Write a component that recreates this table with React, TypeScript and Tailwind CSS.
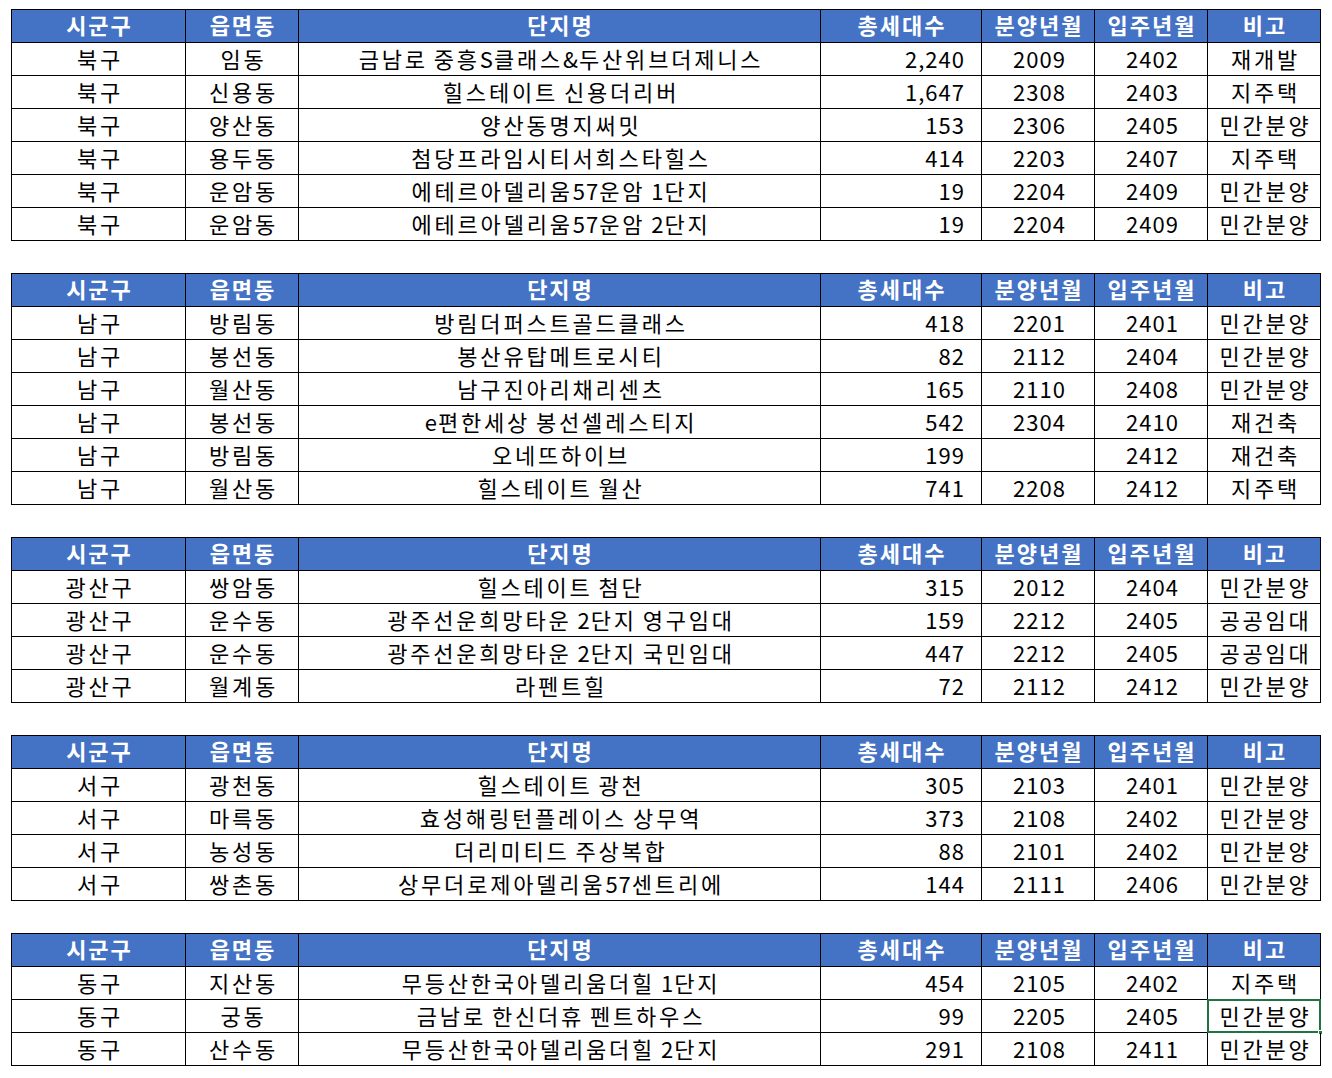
import React from 'react';

type Row = [string, string, string, string, string, string, string];

const tables: Row[][] = [
  [
    ['북구', '임동', '금남로 중흥S클래스&두산위브더제니스', '2,240', '2009', '2402', '재개발'],
    ['북구', '신용동', '힐스테이트 신용더리버', '1,647', '2308', '2403', '지주택'],
    ['북구', '양산동', '양산동명지써밋', '153', '2306', '2405', '민간분양'],
    ['북구', '용두동', '첨당프라임시티서희스타힐스', '414', '2203', '2407', '지주택'],
    ['북구', '운암동', '에테르아델리움57운암 1단지', '19', '2204', '2409', '민간분양'],
    ['북구', '운암동', '에테르아델리움57운암 2단지', '19', '2204', '2409', '민간분양'],
  ],
  [
    ['남구', '방림동', '방림더퍼스트골드클래스', '418', '2201', '2401', '민간분양'],
    ['남구', '봉선동', '봉산유탑메트로시티', '82', '2112', '2404', '민간분양'],
    ['남구', '월산동', '남구진아리채리센츠', '165', '2110', '2408', '민간분양'],
    ['남구', '봉선동', 'e편한세상 봉선셀레스티지', '542', '2304', '2410', '재건축'],
    ['남구', '방림동', '오네뜨하이브', '199', '', '2412', '재건축'],
    ['남구', '월산동', '힐스테이트 월산', '741', '2208', '2412', '지주택'],
  ],
  [
    ['광산구', '쌍암동', '힐스테이트 첨단', '315', '2012', '2404', '민간분양'],
    ['광산구', '운수동', '광주선운희망타운 2단지 영구임대', '159', '2212', '2405', '공공임대'],
    ['광산구', '운수동', '광주선운희망타운 2단지 국민임대', '447', '2212', '2405', '공공임대'],
    ['광산구', '월계동', '라펜트힐', '72', '2112', '2412', '민간분양'],
  ],
  [
    ['서구', '광천동', '힐스테이트 광천', '305', '2103', '2401', '민간분양'],
    ['서구', '마륵동', '효성해링턴플레이스 상무역', '373', '2108', '2402', '민간분양'],
    ['서구', '농성동', '더리미티드 주상복합', '88', '2101', '2402', '민간분양'],
    ['서구', '쌍촌동', '상무더로제아델리움57센트리에', '144', '2111', '2406', '민간분양'],
  ],
  [
    ['동구', '지산동', '무등산한국아델리움더힐 1단지', '454', '2105', '2402', '지주택'],
    ['동구', '궁동', '금남로 한신더휴 펜트하우스', '99', '2205', '2405', '민간분양'],
    ['동구', '산수동', '무등산한국아델리움더힐 2단지', '291', '2108', '2411', '민간분양'],
  ],
];

const headers = ['시군구', '읍면동', '단지명', '총세대수', '분양년월', '입주년월', '비고'];

const gridCols = 'grid grid-cols-[174px_113px_522px_161px_113px_113px_113px]';

// Malgun Gothic spaces Hangul wider than Noto, so widen only the Hangul runs
function SpacedText({ text }: { text: string }) {
  const parts = text.split(/([\uAC00-\uD7A3]+)/).filter(Boolean);
  return (
    <span className="whitespace-pre">
      {parts.map((p, i) =>
        /[\uAC00-\uD7A3]/.test(p) ? (
          <span key={i} className="tracking-[2.8px]">
            {p}
          </span>
        ) : (
          <span key={i} className="tracking-[1px]">
            {p}
          </span>
        )
      )}
    </span>
  );
}

function SheetTable({ rows, selected }: { rows: Row[]; selected?: [number, number] }) {
  return (
    <div className="w-max border-l border-t border-black">
      <div className={`${gridCols} h-[33px] bg-[#4472c4]`}>
        {headers.map((h) => (
          <div
            key={h}
            className="flex items-center justify-center border-r border-b border-black pb-[5px] pl-[2px] text-[22px] font-bold leading-none tracking-[2px] text-white"
          >
            {h}
          </div>
        ))}
      </div>
      {rows.map((r, ri) => (
        <div key={ri} className={`${gridCols} h-[33px] bg-white`}>
          {r.map((c, ci) => (
            <div
              key={ci}
              className={
                'relative flex items-center border-r border-b border-black pb-[3px] text-[22px] leading-none text-black ' +
                (ci === 3 ? 'justify-end pr-[16px]' : 'justify-center pl-[3px]')
              }
            >
              <SpacedText text={c} />
              {selected && selected[0] === ri && selected[1] === ci && (
                <div className="pointer-events-none absolute -left-[1px] -top-[1px] -right-[1px] -bottom-[1px] border-2 border-[#217346]">
                  <div className="absolute -right-[4px] -bottom-[4px] h-[5px] w-[5px] border border-white bg-[#217346]" />
                </div>
              )}
            </div>
          ))}
        </div>
      ))}
    </div>
  );
}

export default function App() {
  return (
    <div
      className="min-h-[1078px] bg-white pl-[11px] pt-[9px]"
      style={{ fontFamily: '"Noto Sans CJK KR", "Noto Sans", sans-serif' }}
    >
      <div className="flex flex-col gap-[32px]">
        {tables.map((t, i) => (
          <SheetTable key={i} rows={t} selected={i === 4 ? [1, 6] : undefined} />
        ))}
      </div>
    </div>
  );
}
